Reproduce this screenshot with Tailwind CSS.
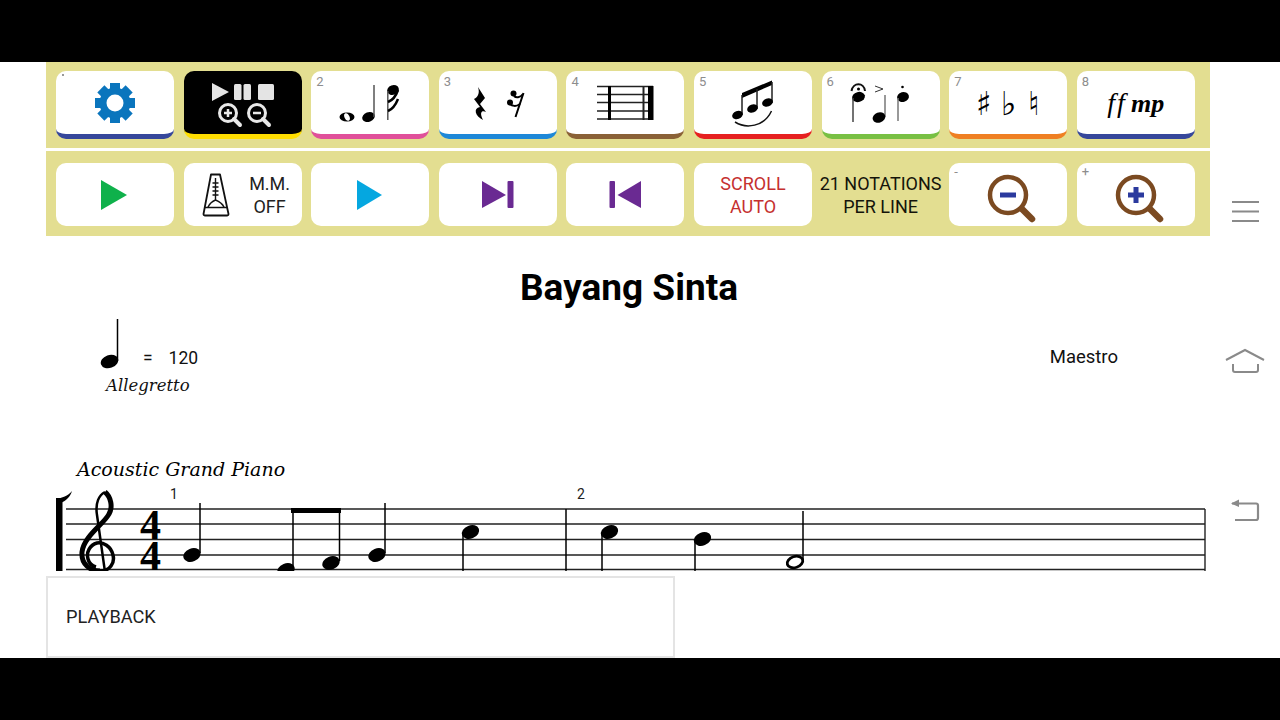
<!DOCTYPE html>
<html>
<head>
<title>Bayang Sinta</title>
<script src="https://cdn.jsdelivr.net/npm/@tailwindcss/browser@4"></script>
</head>
<body class="h-screen overflow-hidden bg-black font-['Roboto',sans-serif] text-black">
  <div class="mt-[62px] flex h-[596px] bg-white">
    <!-- Main column -->
    <div class="w-[1210px] pl-[46px]">
      <!-- Notation palette -->
      <div class="flex h-[86px] gap-[9.6px] bg-[#e3de91] pl-[10px] pt-[9px]">
        <div class="relative h-[68px] w-[118px] rounded-[10px] border-b-[5px] border-[#36479b] bg-white">
          <span class="absolute left-[6px] top-[3px] h-[2px] w-[2px] bg-[#999]"></span>
          <svg class="h-[63px] w-[118px]" viewBox="0 0 118 63">
            <g fill="#0a75bd" transform="translate(59,32)">
              <rect x="-5" y="-20" width="10" height="40"/>
              <rect x="-5" y="-20" width="10" height="40" transform="rotate(45)"/>
              <rect x="-5" y="-20" width="10" height="40" transform="rotate(90)"/>
              <rect x="-5" y="-20" width="10" height="40" transform="rotate(135)"/>
              <circle r="15.500"/>
              <circle r="8.500" fill="#fff"/>
            </g>
          </svg>
        </div>
        <div class="relative h-[68px] w-[118px] rounded-[10px] border-b-[5px] border-[#ffdd00] bg-black">
          <svg class="h-[63px] w-[118px]" viewBox="0 0 118 63" fill="#e4e4e4">
            <path d="M28 12 L28 30 L45 21 Z"/>
            <rect x="50" y="13" width="7.500" height="16" rx="1.500"/>
            <rect x="59.500" y="13" width="7.500" height="16" rx="1.500"/>
            <rect x="74" y="13" width="16" height="16" rx="1.500"/>
            <g fill="none" stroke="#e8e8e8">
              <circle cx="44" cy="42" r="8.500" stroke-width="3"/>
              <path d="M50 48 L56 54" stroke-width="4" stroke-linecap="round"/>
              <path d="M40 42 H48 M44 38 V46" stroke-width="2.500"/>
              <circle cx="73" cy="42" r="8.500" stroke-width="3"/>
              <path d="M79 48 L85 54" stroke-width="4" stroke-linecap="round"/>
              <path d="M69 42 H77" stroke-width="2.500"/>
            </g>
          </svg>
        </div>
        <div class="relative h-[68px] w-[118px] rounded-[10px] border-b-[5px] border-[#e0509a] bg-white">
          <span class="absolute left-[5px] top-[1px] text-[13px] text-[#8d8d8d]">2</span>
          <svg class="h-[63px] w-[118px]" viewBox="0 0 118 63">
            <ellipse cx="36" cy="46" rx="7.500" ry="4.500"/>
            <ellipse cx="36" cy="46" rx="2.500" ry="4" fill="#fff" transform="rotate(-25 36 46)"/>
            <ellipse cx="57.500" cy="46" rx="6.500" ry="4.800" transform="rotate(-20 57.500 46)"/>
            <path d="M63 46 V14" stroke="#555" stroke-width="1.500"/>
            <ellipse cx="82" cy="19" rx="6" ry="4.800" transform="rotate(-20 82 19)"/>
            <path d="M76.800 20 V49" stroke="#555" stroke-width="1.500"/>
            <path d="M77 31 C82 29 85 25 87 19 M77 40 C82 38 85 33 87 28" fill="none" stroke="#000" stroke-width="2.500"/>
          </svg>
        </div>
        <div class="relative h-[68px] w-[118px] rounded-[10px] border-b-[5px] border-[#1e88d8] bg-white">
          <span class="absolute left-[5px] top-[1px] text-[13px] text-[#8d8d8d]">3</span>
          <svg class="h-[63px] w-[118px]" viewBox="0 0 118 63">
            <path d="M39 16 L46 27 L41 33 L47 41 C43 39 40 41 44 49 C36 45 34 37 41 36 L35 28 C39 26 41 22 39 16 Z"/>
            <path d="M84.500 22 L76.500 46" stroke="#000" stroke-width="2"/>
            <path d="M84 23 C81 27 77 27 75 25" fill="none" stroke="#000" stroke-width="2"/>
            <circle cx="74.500" cy="22.500" r="3"/>
            <path d="M81 33 C77 36 73 35 71 33" fill="none" stroke="#000" stroke-width="2"/>
            <circle cx="71" cy="31.500" r="3"/>
          </svg>
        </div>
        <div class="relative h-[68px] w-[118px] rounded-[10px] border-b-[5px] border-[#8a6136] bg-white">
          <span class="absolute left-[5px] top-[1px] text-[13px] text-[#8d8d8d]">4</span>
          <svg class="h-[63px] w-[118px]" viewBox="0 0 118 63">
            <path d="M31 15.500 H87 M31 23.500 H87 M31 31.500 H87 M31 40 H87 M31 48 H87" stroke="#222" stroke-width="1.500"/>
            <path d="M43.500 15 V49" stroke="#000" stroke-width="3"/>
            <path d="M77.500 15 V49" stroke="#222" stroke-width="2"/>
            <rect x="82" y="15" width="5.500" height="34"/>
          </svg>
        </div>
        <div class="relative h-[68px] w-[118px] rounded-[10px] border-b-[5px] border-[#e62020] bg-white">
          <span class="absolute left-[5px] top-[1px] text-[13px] text-[#8d8d8d]">5</span>
          <svg class="h-[63px] w-[118px]" viewBox="0 0 118 63">
            <path d="M48 22 L78 9.500 L78 14 L48 27 Z"/>
            <path d="M48 24 V44 M63 18 V38 M78 11 V32" stroke="#222" stroke-width="1.500"/>
            <ellipse cx="43.500" cy="44" rx="5.500" ry="4" transform="rotate(-20 43.500 44)"/>
            <ellipse cx="58.500" cy="37.500" rx="5.500" ry="4" transform="rotate(-20 58.500 37.500)"/>
            <ellipse cx="73.500" cy="31.500" rx="5.500" ry="4" transform="rotate(-20 73.500 31.500)"/>
            <path d="M41 51 C52 58 70 56 77.500 40" fill="none" stroke="#111" stroke-width="1.500"/>
          </svg>
        </div>
        <div class="relative h-[68px] w-[118px] rounded-[10px] border-b-[5px] border-[#78c043] bg-white">
          <span class="absolute left-[5px] top-[1px] text-[13px] text-[#8d8d8d]">6</span>
          <svg class="h-[63px] w-[118px]" viewBox="0 0 118 63">
            <path d="M29.500 20 C31 11 42 11 43 20" fill="none" stroke="#111" stroke-width="2"/>
            <circle cx="36.500" cy="18" r="1.500"/>
            <ellipse cx="36.500" cy="26" rx="6.500" ry="5" transform="rotate(-15 36.500 26)"/>
            <path d="M31 27 V51" stroke="#444" stroke-width="1.500"/>
            <path d="M53 15 L61 18 L53 21" fill="none" stroke="#333" stroke-width="1"/>
            <path d="M63 24 V46" stroke="#777" stroke-width="1.500"/>
            <ellipse cx="57" cy="46.500" rx="6.500" ry="5" transform="rotate(-20 57 46.500)"/>
            <circle cx="80.500" cy="16" r="1.300"/>
            <ellipse cx="81" cy="26" rx="6" ry="5" transform="rotate(-15 81 26)"/>
            <path d="M76 27 V50" stroke="#777" stroke-width="1.500"/>
          </svg>
        </div>
        <div class="relative h-[68px] w-[118px] rounded-[10px] border-b-[5px] border-[#ef7f22] bg-white">
          <span class="absolute left-[5px] top-[1px] text-[13px] text-[#8d8d8d]">7</span>
          <div class="flex h-[63px] items-center justify-center pl-[1px] pt-[2px] font-['DejaVu_Sans',sans-serif] text-[33px] leading-none">
            <span class="w-[25px] text-center">♯</span><span class="w-[25px] text-center">♭</span><span class="w-[25px] text-center">♮</span>
          </div>
        </div>
        <div class="relative h-[68px] w-[118px] rounded-[10px] border-b-[5px] border-[#36479b] bg-white">
          <span class="absolute left-[5px] top-[1px] text-[13px] text-[#8d8d8d]">8</span>
          <div class="flex h-[63px] items-baseline justify-center gap-[4px] pt-[18px] font-['Liberation_Serif',serif] italic leading-none">
            <span class="text-[28px] tracking-[2px]">ff</span><span class="text-[26px] font-bold">mp</span>
          </div>
        </div>
      </div>

      <!-- Playback controls -->
      <div class="mt-[3px] flex h-[85px] gap-[9.6px] bg-[#e3de91] pl-[10px] pt-[12px]">
        <div class="h-[63px] w-[118px] rounded-[10px] bg-white">
          <svg class="h-[63px] w-[118px]" viewBox="0 0 118 63"><path d="M45 17 L45 47 L71 32 Z" fill="#0fb14b"/></svg>
        </div>
        <div class="flex h-[63px] w-[118px] items-center rounded-[10px] bg-white pl-[18px]">
          <svg class="h-[44px] w-[28px]" viewBox="0 0 28 44" fill="none" stroke="#111" stroke-width="1.800" stroke-linejoin="round">
            <path d="M9 1.500 H18 L26.500 41 A1.500 1.500 0 0 1 25 42.500 H3 A1.500 1.500 0 0 1 1.500 41 Z"/>
            <path d="M3 34.500 H25 M6 34 C8 30 11 28 13.500 27 C16 28 20 30 22 34 M13.500 27 V5 M10.500 10 H16.500 M10.500 14 H16.500 M10.500 18 H16.500 M10.500 22 H16.500" stroke-width="1.400"/>
          </svg>
          <div class="ml-[9px] w-[62px] text-center text-[18px] leading-[23px] text-[#222]">M.M.<br>OFF</div>
        </div>
        <div class="h-[63px] w-[118px] rounded-[10px] bg-white">
          <svg class="h-[63px] w-[118px]" viewBox="0 0 118 63"><path d="M46 17 L46 47 L71 32 Z" fill="#05a7e0"/></svg>
        </div>
        <div class="h-[63px] w-[118px] rounded-[10px] bg-white">
          <svg class="h-[63px] w-[118px]" viewBox="0 0 118 63" fill="#6a2a92">
            <path d="M43 18 L43 45 L67 32 Z"/><rect x="68.500" y="18" width="6" height="27" rx="1"/>
          </svg>
        </div>
        <div class="h-[63px] w-[118px] rounded-[10px] bg-white">
          <svg class="h-[63px] w-[118px]" viewBox="0 0 118 63" fill="#6a2a92">
            <rect x="43.500" y="18" width="5.500" height="27" rx="1"/><path d="M75 18 L75 45 L51.500 32 Z"/>
          </svg>
        </div>
        <div class="flex h-[63px] w-[118px] items-center justify-center rounded-[10px] bg-white text-center text-[18px] leading-[23px] text-[#c5302f]">SCROLL<br>AUTO</div>
        <div class="flex h-[63px] w-[118px] items-center justify-center whitespace-nowrap text-center text-[18px] leading-[23px] text-[#14140a]">21 NOTATIONS<br>PER LINE</div>
        <div class="relative h-[63px] w-[118px] rounded-[10px] bg-white">
          <span class="absolute left-[5px] top-[-1px] text-[13px] text-[#8d8d8d]">-</span>
          <svg class="h-[63px] w-[118px]" viewBox="0 0 118 63" fill="none">
            <circle cx="59" cy="32" r="18" stroke="#7b4a21" stroke-width="4.500"/>
            <path d="M73 46 L83 56" stroke="#7b4a21" stroke-width="6.500" stroke-linecap="round"/>
            <path d="M51 32 H67" stroke="#2b3a9e" stroke-width="5"/>
          </svg>
        </div>
        <div class="relative h-[63px] w-[118px] rounded-[10px] bg-white">
          <span class="absolute left-[5px] top-[-1px] text-[13px] text-[#8d8d8d]">+</span>
          <svg class="h-[63px] w-[118px]" viewBox="0 0 118 63" fill="none">
            <circle cx="59" cy="32" r="18" stroke="#7b4a21" stroke-width="4.500"/>
            <path d="M73 46 L83 56" stroke="#7b4a21" stroke-width="6.500" stroke-linecap="round"/>
            <path d="M51 32 H67 M59 24 V40" stroke="#2b3a9e" stroke-width="5"/>
          </svg>
        </div>
      </div>

      <!-- Score header -->
      <h1 class="flex h-[82px] items-center justify-center pl-[2px] pt-[20px] text-[37px] font-bold leading-none">Bayang Sinta</h1>
      <div class="flex h-[80px] items-start justify-between pl-[54px] pr-[92px]">
        <div>
          <div class="flex items-end">
            <svg class="h-[52px] w-[24px]" viewBox="0 0 24 52">
              <ellipse cx="9.500" cy="43.500" rx="9" ry="6.500" transform="rotate(-20 9.500 43.500)"/>
              <path d="M17.500 43 V1" stroke="#000" stroke-width="1.500"/>
            </svg>
            <span class="ml-[19px] text-[17.500px] leading-[24px] text-[#111]">=</span>
            <span class="ml-[16px] text-[17.500px] leading-[24px] text-[#111]">120</span>
          </div>
          <div class="ml-[6px] mt-[4px] font-['DejaVu_Serif',serif] text-[16.500px] italic leading-[24px] text-[#111]">Allegretto</div>
        </div>
        <span class="pt-[26px] text-[18.500px] leading-[26px] text-[#111]">Maestro</span>
      </div>

      <!-- Staff -->
      <div class="ml-[31px] mt-[60px] h-[22px] font-['DejaVu_Serif',serif] text-[19px] italic leading-[22px] text-black">Acoustic Grand Piano</div>
      <svg class="mt-[6px] block h-[85px] w-[1164px]" viewBox="46 486 1164 85">
        <path d="M66 509 H1205 M66 524 H1205 M66 539.500 H1205 M66 555 H1205 M66 569.500 H1205" stroke="#222" stroke-width="1.400"/>
        <path d="M56 498 H62.500 V572 H56 Z"/>
        <path d="M56 499 C62 498 68 496 72 491 C70 497 66 501 60 503 Z"/>
        <path d="M105 572 L97 515 C95 503 99 495 105 492" fill="none" stroke="#000" stroke-width="2.500"/>
        <path d="M105 492 C111 497 113 507 109 514 C104 524 84 536 82 552 C81 564 90 571 100 571" fill="none" stroke="#000" stroke-width="5"/>
        <path d="M100 571 C110 571 115 563 113 555 C111 546 103 542 97 543 C90 545 86 552 88 559 C89 563 92 566 96 567" fill="none" stroke="#000" stroke-width="3.500"/>
        <text x="140" y="538.500" font-family="Liberation Serif" font-weight="700" font-size="42">4</text>
        <text x="140" y="569.500" font-family="Liberation Serif" font-weight="700" font-size="42">4</text>
        <text x="170" y="499" font-family="Roboto" font-size="14" fill="#222">1</text>
        <text x="577" y="499" font-family="Roboto" font-size="14" fill="#222">2</text>
        <ellipse cx="192" cy="555" rx="9" ry="6.500" transform="rotate(-22 192 555)"/>
        <path d="M200 553 V503" stroke="#000" stroke-width="1.500"/>
        <rect x="291" y="508" width="50" height="5"/>
        <ellipse cx="286" cy="570" rx="9" ry="6.500" transform="rotate(-22 286 570)"/>
        <path d="M293 571 V510" stroke="#000" stroke-width="1.500"/>
        <ellipse cx="331" cy="563" rx="9" ry="6.500" transform="rotate(-22 331 563)"/>
        <path d="M339.500 561 V510" stroke="#000" stroke-width="1.500"/>
        <ellipse cx="377" cy="555" rx="9" ry="6.500" transform="rotate(-22 377 555)"/>
        <path d="M385 553 V503" stroke="#000" stroke-width="1.500"/>
        <ellipse cx="470.500" cy="532" rx="9" ry="6.500" transform="rotate(-22 470.500 532)"/>
        <path d="M463 534 V571" stroke="#000" stroke-width="1.500"/>
        <path d="M566 509 V571" stroke="#000" stroke-width="1.500"/>
        <ellipse cx="609.500" cy="532" rx="9" ry="6.500" transform="rotate(-22 609.500 532)"/>
        <path d="M602 534 V571" stroke="#000" stroke-width="1.500"/>
        <ellipse cx="702.500" cy="539" rx="9" ry="6.500" transform="rotate(-22 702.500 539)"/>
        <path d="M695 541 V571" stroke="#000" stroke-width="1.500"/>
        <ellipse cx="795" cy="562" rx="8" ry="5.500" fill="#fff" stroke="#000" stroke-width="2.800" transform="rotate(-18 795 562)"/>
        <path d="M803 560 V511" stroke="#000" stroke-width="1.500"/>
        <path d="M1205 509 V571" stroke="#222" stroke-width="1.400"/>
      </svg>

      <!-- Playback panel -->
      <div class="mt-[5px] flex h-[82px] w-[629px] items-center border-2 border-[#e4e4e4] pb-[1px] pl-[18px] text-[18.200px] text-[#222]">PLAYBACK</div>
    </div>

    <!-- Device navigation -->
    <div class="flex w-[70px] flex-col items-center">
      <svg class="mt-[138px] h-[24px] w-[30px]" viewBox="0 0 30 24" stroke="#8a8a8a" stroke-width="2.200"><path d="M2 2 H29 M2 11.500 H29 M2 21 H29"/></svg>
      <svg class="mt-[123px] h-[28px] w-[42px]" viewBox="0 0 42 28" fill="none" stroke="#8a8a8a" stroke-width="2"><path d="M2 13 L21 3 L40 13"/><path d="M9 17 V23 Q9 25 11 25 H32 Q34 25 34 23 V17"/></svg>
      <svg class="mt-[123px] h-[24px] w-[32px]" viewBox="0 0 32 24" fill="none" stroke="#8a8a8a" stroke-width="2.200"><path d="M3 5.500 H27 Q29 5.500 29 7.500 V20 Q29 22 27 22 H6"/><path d="M2 5.500 L10 1.500 V9 Z" fill="#8a8a8a" stroke="none"/></svg>
    </div>
  </div>
</body>
</html>
